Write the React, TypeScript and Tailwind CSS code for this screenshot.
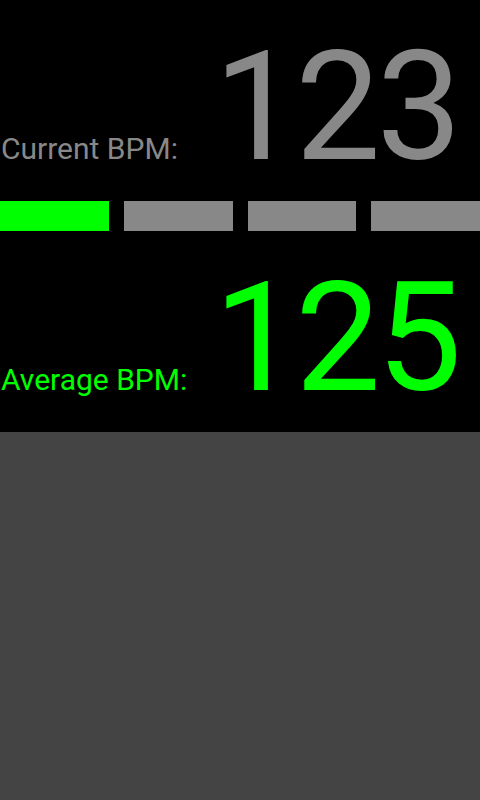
export default function App() {
  const segments = [true, false, false, false];
  return (
    <div className="w-[480px] h-[800px] bg-[#444444] flex flex-col" style={{ fontFamily: 'Roboto, "Noto Sans", sans-serif' }}>
      <div className="h-[432px] bg-black flex flex-col">
        {/* current */}
        <div className="flex items-baseline justify-between pt-[31px] pr-[22px]">
          <span className="text-[30px] leading-none text-[#888888] pl-[1px]">Current BPM:</span>
          <span className="text-[152px] leading-none tracking-[-4px] text-[#888888]">123</span>
        </div>

        {/* segment bar */}
        <div className="flex gap-[15px] mt-[18px] h-[30px]">
          {segments.map((on, i) => (
            <div key={i} className={on ? 'flex-1 bg-[#00ff00]' : 'flex-1 bg-[#888888]'} />
          ))}
        </div>

        {/* average */}
        <div className="flex items-baseline justify-between pt-[31px] pr-[22px]">
          <span className="text-[30px] leading-none text-[#00ff00] pl-[1px]">Average BPM:</span>
          <span className="text-[152px] leading-none tracking-[-4px] text-[#00ff00]">125</span>
        </div>
      </div>
    </div>
  );
}
